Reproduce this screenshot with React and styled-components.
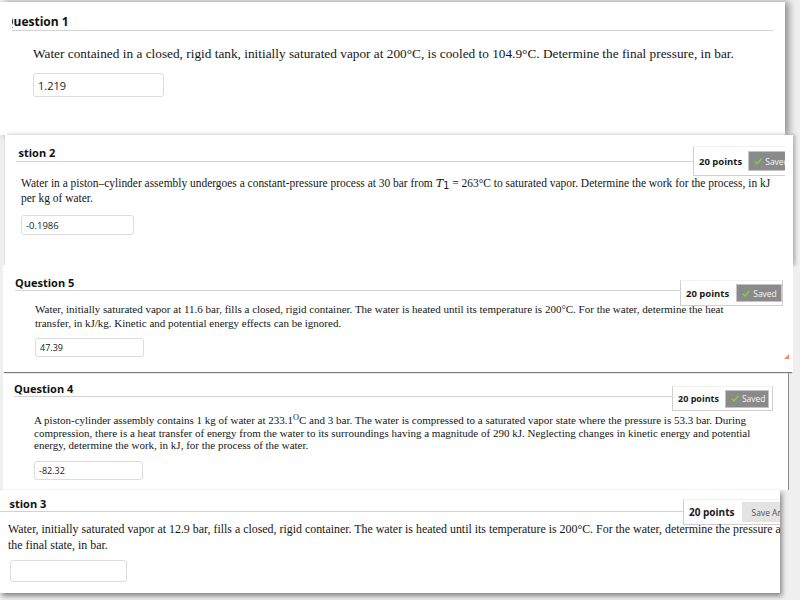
import React from 'react';
import styled, { createGlobalStyle } from 'styled-components';

const GlobalStyle = createGlobalStyle`
  html, body {
    margin: 0;
    padding: 0;
  }
  body {
    width: 800px;
    height: 600px;
    overflow: hidden;
    background: #efefef;
    font-family: "Open Sans", "Liberation Sans", sans-serif;
  }
`;

const Collage = styled.div`
  width: 800px;
  height: 600px;
  display: flex;
  flex-direction: column;
  overflow: hidden;
  background: #efefef;
`;

// one pasted screenshot
const Shot = styled.div`
  flex: none;
  position: relative;
  z-index: ${({ $z }) => $z || 0};
  box-sizing: border-box;
  margin: ${({ $mt }) => $mt || 0}px 0 0 ${({ $left }) => $left}px;
  width: ${({ $width }) => $width}px;
  height: ${({ $height }) => $height}px;
  background: #fff;
  box-shadow: ${({ $shadow }) => $shadow || 'none'};
  border-right: ${({ $edgeRight }) => $edgeRight || 'none'};
`;

const Crop = styled.div`
  width: ${({ $w }) => ($w ? `${$w}px` : '100%')};
  height: 100%;
  overflow: hidden;
`;

const Card = styled.div`
  box-sizing: border-box;
  width: ${({ $w }) => $w}px;
  padding: ${({ $pt }) => $pt}px 0 0 ${({ $pl }) => $pl}px;
`;

const Header = styled.div`
  display: flex;
  align-items: flex-end;
`;

const HeadLine = styled.div`
  flex: 1;
  min-width: 0;
  border-bottom: 1px solid #d2d2d2;
`;

// the screenshots were cut through the heading, so part of it is hidden
const TitleClip = styled.div`
  margin-left: ${({ $pad }) => $pad || 0}px;
  overflow: hidden;
`;

const Title = styled.h3`
  margin: 0 0 0 ${({ $cut }) => -($cut || 0)}px;
  font-family: "Open Sans", "Liberation Sans", sans-serif;
  font-weight: 700;
  font-size: ${({ $size }) => $size}px;
  line-height: ${({ $lh }) => $lh}px;
  color: #111;
  white-space: nowrap;
`;

const Points = styled.div`
  flex: none;
  display: flex;
  align-items: center;
  gap: ${({ $gap }) => $gap}px;
  box-sizing: border-box;
  width: ${({ $w }) => $w}px;
  height: ${({ $h }) => $h}px;
  margin-bottom: ${({ $drop }) => -$drop}px;
  padding: 0 0 0 5px;
  background: #fff;
  border: 1px solid #cfcfcf;
  border-top-color: #f1f1f1;
  white-space: nowrap;
`;

const PointsLabel = styled.span`
  font-family: "Open Sans", "Liberation Sans", sans-serif;
  font-weight: 700;
  font-size: ${({ $size }) => $size}px;
  color: #1a1a1a;
`;

const SaveButton = styled.div`
  flex: none;
  display: flex;
  align-items: center;
  gap: 3px;
  box-sizing: border-box;
  width: ${({ $w }) => $w}px;
  height: ${({ $h }) => $h}px;
  padding-left: ${({ $saved }) => ($saved ? 5 : 9)}px;
  background: ${({ $saved }) => ($saved ? '#8a8a8a' : '#e3e3e3')};
  border: 1px solid ${({ $saved }) => ($saved ? '#c4c4c4' : '#e3e3e3')};
  color: ${({ $saved }) => ($saved ? '#f4f4f4' : '#555')};
  font-family: "Open Sans", "Liberation Sans", sans-serif;
  font-size: 8.5px;
  white-space: nowrap;
  overflow: hidden;
`;

const Prompt = styled.p`
  margin: ${({ $mt }) => $mt}px 0 0 ${({ $ml }) => $ml}px;
  font-family: "Liberation Serif", "Times New Roman", serif;
  font-size: ${({ $size }) => $size}px;
  line-height: ${({ $lh }) => $lh}px;
  color: #161616;
  white-space: nowrap;

  sup {
    font-size: 0.75em;
    line-height: 0;
    vertical-align: 0.45em;
  }
`;

const MathVar = styled.span`
  font-family: "DejaVu Serif", "Liberation Serif", serif;
  font-style: italic;
  font-size: 1em;

  sub {
    font-style: normal;
    font-family: "DejaVu Sans", sans-serif;
    font-size: 0.85em;
    line-height: 0;
    vertical-align: -0.25em;
  }
`;

const Answer = styled.input`
  display: block;
  box-sizing: border-box;
  margin: ${({ $mt }) => $mt}px 0 0 ${({ $ml }) => $ml}px;
  width: ${({ $w }) => $w}px;
  height: ${({ $h }) => $h}px;
  padding: 0 4px;
  border: 1px solid #dcdcdc;
  border-radius: 3px;
  background: #fff;
  font-family: "Open Sans", "Liberation Sans", sans-serif;
  font-size: ${({ $size }) => $size}px;
  color: #222;
  outline: none;
`;

const Grip = styled.div`
  position: absolute;
  right: 4px;
  bottom: 13px;
  width: 0;
  height: 0;
  border-left: 5px solid transparent;
  border-bottom: 5px solid #ef8a6c;
`;

const Check = () => (
  <svg width="8" height="7" viewBox="0 0 8 7">
    <path d="M0.8 3.8 L3 5.9 L7.3 0.8" fill="none" stroke="#7fd13b" strokeWidth="1.5" />
  </svg>
);

const shots = [
  {
    key: 'q1',
    shot: { left: 0, width: 785, height: 133, mt: 2, shadow: '4px 0 7px rgba(0,0,0,0.4)' },
    card: { pt: 12, pl: 12, w: 773 },
    title: { text: 'Question 1', size: 12, lh: 16, cut: 8 },
    prompt: { ml: 21, mt: 14, size: 13.3, lh: 17 },
    lines: ['Water contained in a closed, rigid tank, initially saturated vapor at 200°C, is cooled to 104.9°C. Determine the final pressure, in bar.'],
    answer: { ml: 21, mt: 11, w: 131, h: 24, size: 11, value: '1.219' },
  },
  {
    key: 'q2',
    shot: { left: 5, width: 788, height: 130, shadow: '2px 0 4px rgba(0,0,0,0.3)' },
    crop: 780,
    card: { pt: 10, pl: 11, w: 828 },
    title: { text: 'Question 2', size: 11, lh: 16, pad: 2, cut: 22 },
    points: { w: 140, h: 30, drop: 14, gap: 6, size: 9.5, btn: { w: 60, h: 20, saved: true } },
    prompt: { ml: 5, mt: 14, size: 11.45, lh: 15 },
    lines: [
      <>Water in a piston–cylinder assembly undergoes a constant-pressure process at 30 bar from <MathVar>T<sub>1</sub></MathVar> = 263°C to saturated vapor. Determine the work for the process, in kJ</>,
      'per kg of water.',
    ],
    answer: { ml: 5, mt: 9, w: 113, h: 20, size: 9.5, value: '-0.1986' },
  },
  {
    key: 'q5',
    shot: { left: 3, width: 790, height: 107, z: 2, shadow: '0 2px 1px -1px #7c7c7c' },
    card: { pt: 11, pl: 12, w: 780 },
    title: { text: 'Question 5', size: 11, lh: 14 },
    points: { w: 103, h: 26, drop: 15, gap: 7, size: 9.5, btn: { w: 46, h: 18, saved: true } },
    prompt: { ml: 20, mt: 11, size: 11, lh: 14 },
    lines: [
      'Water, initially saturated vapor at 11.6 bar, fills a closed, rigid container. The water is heated until its temperature is 200°C. For the water, determine the heat',
      'transfer, in kJ/kg. Kinetic and potential energy effects can be ignored.',
    ],
    answer: { ml: 20, mt: 8, w: 109, h: 19, size: 9, value: '47.39' },
    grip: true,
  },
  {
    key: 'q4',
    shot: { left: 3, width: 786, height: 118, edgeRight: '1px solid #8a8a8a' },
    card: { pt: 10, pl: 11, w: 770 },
    title: { text: 'Question 4', size: 11, lh: 14 },
    points: { w: 101, h: 25, drop: 14, gap: 6, size: 9, btn: { w: 44, h: 18, saved: true } },
    prompt: { ml: 20, mt: 17, size: 11, lh: 12.5 },
    lines: [
      <>A piston-cylinder assembly contains 1 kg of water at 233.1<sup>O</sup>C and 3 bar. The water is compressed to a saturated vapor state where the pressure is 53.3 bar. During</>,
      'compression, there is a heat transfer of energy from the water to its surroundings having a magnitude of 290 kJ. Neglecting changes in kinetic energy and potential',
      'energy, determine the work, in kJ, for the process of the water.',
    ],
    answer: { ml: 20, mt: 9, w: 109, h: 19, size: 9, value: '-82.32' },
  },
  {
    key: 'q3',
    shot: { left: 0, width: 780, height: 103, shadow: '2px 3px 5px rgba(0,0,0,0.45)' },
    card: { pt: 7, pl: 0, w: 823 },
    title: { text: 'Question 3', size: 11, lh: 14, pad: 9, cut: 22 },
    points: { w: 140, h: 26, drop: 13, gap: 7, size: 10, btn: { w: 70, h: 20, saved: false } },
    prompt: { ml: 8, mt: 9, size: 11.9, lh: 16 },
    lines: [
      'Water, initially saturated vapor at 12.9 bar, fills a closed, rigid container. The water is heated until its temperature is 200°C. For the water, determine the pressure at',
      'the final state, in bar.',
    ],
    answer: { ml: 10, mt: 7, w: 117, h: 22, size: 9.5, value: '' },
  },
];

const Question = ({ q }) => (
  <Shot
    $left={q.shot.left}
    $width={q.shot.width}
    $height={q.shot.height}
    $mt={q.shot.mt}
    $z={q.shot.z}
    $shadow={q.shot.shadow}
    $edgeRight={q.shot.edgeRight}
  >
    <Crop $w={q.crop}>
      <Card $pt={q.card.pt} $pl={q.card.pl} $w={q.card.w}>
        <Header>
          <HeadLine>
            <TitleClip $pad={q.title.pad}>
              <Title $cut={q.title.cut} $size={q.title.size} $lh={q.title.lh}>{q.title.text}</Title>
            </TitleClip>
          </HeadLine>
          {q.points && (
            <Points $w={q.points.w} $h={q.points.h} $drop={q.points.drop} $gap={q.points.gap}>
              <PointsLabel $size={q.points.size}>20 points</PointsLabel>
              <SaveButton $w={q.points.btn.w} $h={q.points.btn.h} $saved={q.points.btn.saved}>
                {q.points.btn.saved ? (
                  <>
                    <Check />
                    Saved
                  </>
                ) : (
                  'Save Answer'
                )}
              </SaveButton>
            </Points>
          )}
        </Header>
        <Prompt $ml={q.prompt.ml} $mt={q.prompt.mt} $size={q.prompt.size} $lh={q.prompt.lh}>
          {q.lines.map((line, i) => (
            <React.Fragment key={i}>
              {i > 0 && <br />}
              {line}
            </React.Fragment>
          ))}
        </Prompt>
        <Answer
          readOnly
          value={q.answer.value}
          $ml={q.answer.ml}
          $mt={q.answer.mt}
          $w={q.answer.w}
          $h={q.answer.h}
          $size={q.answer.size}
        />
      </Card>
    </Crop>
    {q.grip && <Grip />}
  </Shot>
);

const App = () => (
  <>
    <GlobalStyle />
    <Collage>
      {shots.map((q) => (
        <Question key={q.key} q={q} />
      ))}
    </Collage>
  </>
);

export default App;
